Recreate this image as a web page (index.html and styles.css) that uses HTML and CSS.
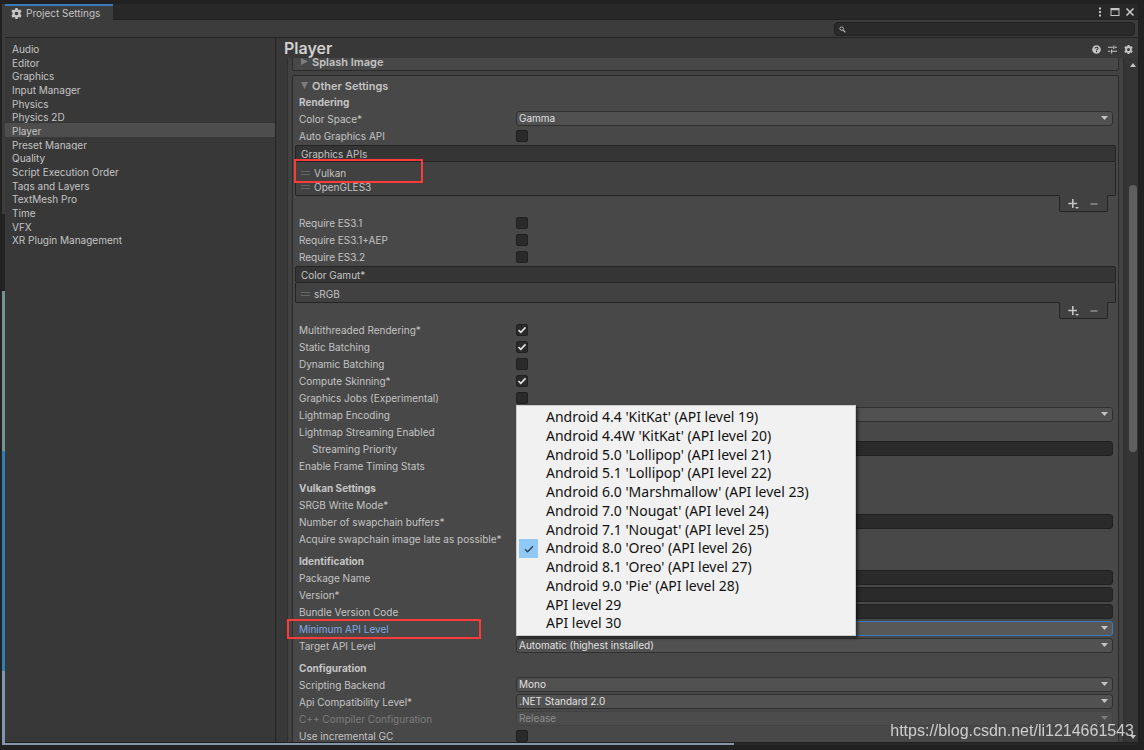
FILE: index.html
```html
<!DOCTYPE html>
<html lang="en">
<head>
<meta charset="utf-8">
<title>Project Settings</title>
<link rel="stylesheet" href="styles.css">
</head>
<body>
<svg class="defs" aria-hidden="true">
  <symbol id="gear" viewBox="0 0 12 12"><path fill-rule="evenodd" d="M4.800 0h2.400l.4 1.600 1 .5 1.600-.6 1.400 2.100-1.200 1.200v2.400l1.200 1.200-1.400 2.100-1.600-.6-1 .5-.4 1.600H4.800l-.4-1.600-1-.5-1.600.6L.4 8.400l1.200-1.200V4.800L.4 3.600l1.400-2.100 1.600.6 1-.5zM6 4a2 2 0 1 0 0 4 2 2 0 0 0 0-4z"/></symbol>
  <symbol id="check" viewBox="0 0 12 12"><path d="M2.500 6.200l2.300 2.200L9.500 3.400" fill="none" stroke="currentColor" stroke-width="1.600"/></symbol>
  <symbol id="plus" viewBox="0 0 12 12"><path d="M5 1h1.600v3.700H10v1.600H6.600V10H5V6.300H1.300V4.700H5z"/><path d="M8 9h4l-2 2z"/></symbol>
  <symbol id="minus" viewBox="0 0 12 12"><path d="M2.500 5.200h7v1.600h-7z"/></symbol>
</svg>

<div class="backdrop">
<main class="window">
  <header class="tabbar">
    <button class="tab" type="button"><svg class="tab-icon"><use href="#gear"/></svg>Project Settings</button>
    <div class="window-buttons">
      <button type="button" aria-label="Menu"><svg viewBox="0 0 10 10"><path d="M4 .5h2v2H4zM4 4h2v2H4zM4 7.500h2v2H4z"/></svg></button>
      <button type="button" aria-label="Maximize"><svg viewBox="0 0 10 10"><path fill-rule="evenodd" d="M.5 1h9v8h-9zM1.500 3.300V8h7V3.300z"/></svg></button>
      <button type="button" aria-label="Close"><svg viewBox="0 0 10 10"><path d="M1.500 1.500l7 7M8.500 1.500l-7 7" stroke="#c8c8c8" stroke-width="1.600"/></svg></button>
    </div>
  </header>

  <div class="toolbar">
    <label class="search">
      <svg viewBox="0 0 8 8"><circle cx="3" cy="3" r="2" fill="none" stroke="#c4c4c4"/><path d="M4.500 4.500l2.800 2.800" stroke="#c4c4c4" stroke-width="1.300"/></svg>
      <input type="search" aria-label="Search settings">
    </label>
  </div>

  <div class="columns">
    <nav class="categories">
      <a href="#">Audio</a>
      <a href="#">Editor</a>
      <a href="#">Graphics</a>
      <a href="#">Input Manager</a>
      <a href="#">Physics</a>
      <a href="#">Physics 2D</a>
      <a href="#" class="current">Player</a>
      <a href="#">Preset Manager</a>
      <a href="#">Quality</a>
      <a href="#">Script Execution Order</a>
      <a href="#">Tags and Layers</a>
      <a href="#">TextMesh Pro</a>
      <a href="#">Time</a>
      <a href="#">VFX</a>
      <a href="#">XR Plugin Management</a>
    </nav>

    <section class="content">
      <div class="title-row">
        <h1>Player</h1>
        <div class="title-buttons">
          <button type="button" aria-label="Help"><svg viewBox="0 0 10 10"><circle cx="5" cy="5" r="4.800"/><path d="M3.400 4c0-2 3.200-2 3.200-.2C6.600 5 5 4.800 5 6M5 6.800v1.200" fill="none" stroke="#383838" stroke-width="1.200"/></svg></button>
          <button type="button" aria-label="Presets"><svg viewBox="0 0 10 10"><path d="M0 2.500h5.500M7.500 2.500H10M6.500.5v4M0 7h2.500M4.500 7H10M4 5v4.500" fill="none" stroke="#c4c4c4" stroke-width="1.200"/></svg></button>
          <button type="button" aria-label="Options"><svg><use href="#gear"/></svg></button>
        </div>
      </div>

      <div class="scroller">
        <div class="page">
          <section class="group splash">
            <h2 class="foldout closed">Splash Image</h2>
          </section>

          <section class="group">
            <h2 class="foldout open">Other Settings</h2>

            <h3>Rendering</h3>
            <div class="row"><label for="color-space">Color Space*</label><span class="drop"><select id="color-space"><option>Gamma</option></select></span></div>
            <div class="row"><label for="auto-api">Auto Graphics API</label><span class="tick"><input type="checkbox" id="auto-api"><svg><use href="#check"/></svg></span></div>

            <div class="list">
              <div class="list-head">Graphics APIs</div>
              <ul>
                <li class="marked">Vulkan</li>
                <li>OpenGLES3</li>
              </ul>
              <div class="list-foot">
                <button type="button" aria-label="Add graphics API"><svg><use href="#plus"/></svg></button>
                <button type="button" class="dim" aria-label="Remove graphics API"><svg><use href="#minus"/></svg></button>
              </div>
            </div>

            <div class="row"><label for="es31">Require ES3.1</label><span class="tick"><input type="checkbox" id="es31"><svg><use href="#check"/></svg></span></div>
            <div class="row"><label for="es31aep">Require ES3.1+AEP</label><span class="tick"><input type="checkbox" id="es31aep"><svg><use href="#check"/></svg></span></div>
            <div class="row"><label for="es32">Require ES3.2</label><span class="tick"><input type="checkbox" id="es32"><svg><use href="#check"/></svg></span></div>

            <div class="list">
              <div class="list-head">Color Gamut*</div>
              <ul>
                <li>sRGB</li>
              </ul>
              <div class="list-foot">
                <button type="button" aria-label="Add color gamut"><svg><use href="#plus"/></svg></button>
                <button type="button" class="dim" aria-label="Remove color gamut"><svg><use href="#minus"/></svg></button>
              </div>
            </div>

            <div class="row"><label for="mt">Multithreaded Rendering*</label><span class="tick"><input type="checkbox" id="mt" checked><svg><use href="#check"/></svg></span></div>
            <div class="row"><label for="static">Static Batching</label><span class="tick"><input type="checkbox" id="static" checked><svg><use href="#check"/></svg></span></div>
            <div class="row"><label for="dynamic">Dynamic Batching</label><span class="tick"><input type="checkbox" id="dynamic"><svg><use href="#check"/></svg></span></div>
            <div class="row"><label for="skinning">Compute Skinning*</label><span class="tick"><input type="checkbox" id="skinning" checked><svg><use href="#check"/></svg></span></div>
            <div class="row"><label for="jobs">Graphics Jobs (Experimental)</label><span class="tick"><input type="checkbox" id="jobs"><svg><use href="#check"/></svg></span></div>
            <div class="row"><label for="lightmap">Lightmap Encoding</label><span class="drop"><select id="lightmap"><option></option></select></span></div>
            <div class="row"><label for="streaming">Lightmap Streaming Enabled</label><span class="tick"><input type="checkbox" id="streaming"><svg><use href="#check"/></svg></span></div>
            <div class="row indent"><label for="priority">Streaming Priority</label><input class="field" type="text" id="priority"></div>
            <div class="row"><label for="timing">Enable Frame Timing Stats</label><span class="tick"><input type="checkbox" id="timing"><svg><use href="#check"/></svg></span></div>

            <h3>Vulkan Settings</h3>
            <div class="row"><label for="srgb-write">SRGB Write Mode*</label><span class="tick"><input type="checkbox" id="srgb-write"><svg><use href="#check"/></svg></span></div>
            <div class="row"><label for="buffers">Number of swapchain buffers*</label><input class="field" type="text" id="buffers"></div>
            <div class="row"><label for="acquire">Acquire swapchain image late as possible*</label><span class="tick"><input type="checkbox" id="acquire"><svg><use href="#check"/></svg></span></div>

            <h3>Identification</h3>
            <div class="row"><label for="package">Package Name</label><input class="field" type="text" id="package"></div>
            <div class="row"><label for="version">Version*</label><input class="field" type="text" id="version"></div>
            <div class="row"><label for="bundle">Bundle Version Code</label><input class="field" type="text" id="bundle"></div>
            <div class="row active"><label for="min-api">Minimum API Level</label>
              <span class="drop"><select id="min-api"><option></option></select>
                <ul class="menu" role="listbox" aria-label="Minimum API Level">
                  <li role="option">Android 4.4 'KitKat' (API level 19)</li>
                  <li role="option">Android 4.4W 'KitKat' (API level 20)</li>
                  <li role="option">Android 5.0 'Lollipop' (API level 21)</li>
                  <li role="option">Android 5.1 'Lollipop' (API level 22)</li>
                  <li role="option">Android 6.0 'Marshmallow' (API level 23)</li>
                  <li role="option">Android 7.0 'Nougat' (API level 24)</li>
                  <li role="option">Android 7.1 'Nougat' (API level 25)</li>
                  <li role="option" aria-selected="true"><span class="menu-check"><svg viewBox="0 0 12 12"><path d="M2 6.300l2.600 2.500L10 3.300" fill="none" stroke="#26425a" stroke-width="1.300"/></svg></span>Android 8.0 'Oreo' (API level 26)</li>
                  <li role="option">Android 8.1 'Oreo' (API level 27)</li>
                  <li role="option">Android 9.0 'Pie' (API level 28)</li>
                  <li role="option">API level 29</li>
                  <li role="option">API level 30</li>
                </ul>
              </span>
            </div>
            <div class="row"><label for="target-api">Target API Level</label><span class="drop"><select id="target-api"><option>Automatic (highest installed)</option></select></span></div>

            <h3>Configuration</h3>
            <div class="row"><label for="backend">Scripting Backend</label><span class="drop"><select id="backend"><option>Mono</option></select></span></div>
            <div class="row"><label for="compat">Api Compatibility Level*</label><span class="drop"><select id="compat"><option>.NET Standard 2.0</option></select></span></div>
            <div class="row disabled"><label for="cpp">C++ Compiler Configuration</label><span class="drop"><select id="cpp" disabled><option>Release</option></select></span></div>
            <div class="row"><label for="gc">Use incremental GC</label><span class="tick"><input type="checkbox" id="gc"><svg><use href="#check"/></svg></span></div>
          </section>
        </div>
        <div class="scrollbar"><span class="arrow up"></span><span class="thumb"></span><span class="arrow down"></span></div>
      </div>
    </section>
  </div>
</main>
</div>
<div class="watermark">https://blog.csdn.net/li1214661543</div>
</body>
</html>
```
FILE: styles.css
```css
*, *::before, *::after { box-sizing: border-box; }

body {
  margin: 0;
  height: 100vh;
  padding: 4px 6px 5px 2px;
  background: #212121;
  color: #c4c4c4;
  font: 10px/16px Inter, "Liberation Sans", sans-serif;
  overflow: hidden;
}

h1, h2, h3, ul { margin: 0; padding: 0; font-size: inherit; }
ul { list-style: none; }
button { padding: 0; border: 0; background: none; color: inherit; font: inherit; }
svg { display: block; fill: #c4c4c4; }
.defs { position: absolute; width: 0; height: 0; }

/* Desktop strip that shows round the window's left and bottom edges */
.backdrop {
  height: 100%;
  padding: 0 0 3px 3px;
  background:
    linear-gradient(90deg, #8495ad 732px, #272727 732px) bottom / 100% 2px no-repeat,
    linear-gradient(#3c3c3c 210px, #222 210px 287px, #759391 287px 447px, #2f80b2 447px 667px, #8295ae 667px) left / 3px 100% no-repeat;
}

.window {
  display: flex;
  flex-direction: column;
  height: 100%;
  background: #383838;
}

/* Tab bar */
.tabbar {
  display: flex;
  justify-content: space-between;
  height: 16px;
  background: #282828;
  border-bottom: 1px solid #232323;
}
.tab {
  display: flex;
  align-items: center;
  gap: 4px;
  height: 16px;
  padding: 0 13px 0 6px;
  background: #3c3c3c;
  border-top: 2px solid #3a79bb;
}
.tab-icon { width: 11px; height: 11px; }
.window-buttons { display: flex; align-items: center; gap: 5px; padding-right: 3px; }
.window-buttons svg { width: 10px; height: 10px; }

/* Search */
.toolbar {
  display: flex;
  justify-content: flex-end;
  height: 18px;
  padding: 2px 3px 1px;
  background: #3c3c3c;
  border-bottom: 1px solid #232323;
}
.search {
  display: flex;
  align-items: center;
  width: 301px;
  padding-left: 4px;
  background: #2a2a2a;
  border: 1px solid #212121;
  border-radius: 4px;
}
.search svg { width: 7px; height: 7px; }
.search input {
  flex: 1;
  min-width: 0;
  height: 11px;
  padding: 0 4px;
  border: 0;
  outline: 0;
  background: none;
  color: inherit;
  font: inherit;
  appearance: none;
}

.columns { display: flex; flex: 1; min-height: 0; }

/* Category list */
.categories {
  display: grid;
  flex: 0 0 270px;
  grid-template-rows: repeat(15, 1fr);
  height: 208px;
  padding-top: 3px;
}
.categories a {
  padding-left: 7px;
  overflow: hidden;
  color: inherit;
  line-height: 16px;
  text-decoration: none;
}
.categories .current { background: #4d4d4d; }

/* Content column */
.content { display: flex; flex: 1; flex-direction: column; min-width: 0; border-left: 1px solid #232323; }
.title-row {
  display: flex;
  justify-content: space-between;
  height: 20px;
  padding: 0 5px 0 8px;
}
h1 { font-size: 16px; font-weight: 600; line-height: 21px; color: #d0d0d0; }
.title-buttons { display: flex; gap: 7px; padding-top: 7px; line-height: 0; }
.title-buttons button { height: 9px; }
.title-buttons svg { width: 9px; height: 9px; }

.scroller { display: flex; flex: 1; min-height: 0; padding-left: 11px; overflow: hidden; }
.page {
  flex: 1;
  min-width: 0;
  padding: 0 4px;
  background: #424242;
  border: solid #303030;
  border-width: 0 1px;
}
.scrollbar {
  display: flex;
  flex: 0 0 14px;
  flex-direction: column;
  align-items: center;
  padding: 5px 0 3px 4px;
  background: #353535;
}
.thumb { width: 8px; height: 267px; margin: 118px 0 auto; border-radius: 4px; background: #5f5f5f; }
.arrow { width: 6px; height: 4px; background: #c4c4c4; }
.up { clip-path: polygon(50% 0, 100% 100%, 0 100%); }
.down { clip-path: polygon(0 0, 100% 0, 50% 100%); }

.group {
  padding: 1px 2px;
  background: #484848;
  border: 1px solid #2b2b2b;
  border-radius: 2px;
}
.splash { height: 19px; margin: -6px 0 4px; }

.foldout { display: flex; align-items: center; gap: 4px; height: 17px; padding-left: 6px; font-size: 11px; font-weight: 600; }
.splash .foldout { height: 15px; }
.foldout::before { content: ""; width: 7px; height: 7px; background: #7c7c7c; }
.closed::before { clip-path: polygon(0 0, 100% 50%, 0 100%); }
.open::before { clip-path: polygon(0 0, 100% 0, 50% 100%); }

h3 { height: 16px; margin-top: 6px; padding-left: 4px; font-weight: 700; }
.foldout + h3 { margin-top: 0; }

/* Property rows */
.row { display: flex; align-items: center; height: 17px; padding: 0 3px 0 4px; }
.row label { flex: 0 0 217px; white-space: nowrap; }
.row.indent label { padding-left: 13px; }
.row.active { position: relative; }
.row.active label { color: #7fa8e8; }
.row.disabled { color: #7c7c7c; }

.drop { position: relative; flex: 1; height: 15px; }
.drop select {
  display: block;
  width: 100%;
  height: 15px;
  padding: 0 16px 0 2px;
  border: 1px solid #303030;
  border-radius: 3px;
  outline: 0;
  background: #515151;
  color: #e0e0e0;
  font: 10px/13px Inter, "Liberation Sans", sans-serif;
  appearance: none;
}
.drop::after {
  content: "";
  position: absolute;
  top: 5px;
  right: 5px;
  width: 7px;
  height: 4px;
  background: #c4c4c4;
  clip-path: polygon(0 0, 100% 0, 50% 100%);
}
.active .drop select { border-color: #3a79bb; background: #585858; }
.disabled .drop select { border-color: #424242; background: #4c4c4c; color: #8c8c8c; opacity: 1; }
.disabled .drop::after { background: #7c7c7c; }

.field {
  flex: 1;
  min-width: 0;
  height: 15px;
  padding: 0 3px;
  border: 1px solid #212121;
  border-radius: 3px;
  outline: 0;
  background: #2a2a2a;
  color: inherit;
  font: inherit;
}

.tick { position: relative; width: 12px; height: 12px; }
.tick input {
  display: block;
  width: 12px;
  height: 12px;
  margin: 0;
  border: 1px solid #212121;
  border-radius: 2px;
  background: #2a2a2a;
  appearance: none;
}
.tick svg { position: absolute; inset: 0; width: 12px; height: 12px; color: #e4e4e4; visibility: hidden; pointer-events: none; }
.tick input:checked + svg { visibility: visible; }

/* Reorderable lists */
.list { margin: 1px 0 2px; }
.list-head {
  height: 17px;
  padding-left: 5px;
  background: #353535;
  border: 1px solid #242424;
  border-radius: 2px;
}
.list ul {
  padding: 4px 0 1px;
  background: #414141;
  border: 1px solid #242424;
  border-top: 0;
  border-radius: 0 0 2px 2px;
}
.list li { position: relative; display: flex; align-items: center; gap: 4px; height: 14px; padding-left: 5px; }
.list li::before { content: ""; width: 9px; height: 4px; border: solid #666; border-width: 1px 0; }
.list-foot {
  display: flex;
  justify-content: space-around;
  align-items: center;
  width: 49px;
  height: 17px;
  margin: -1px 8px 0 auto;
  padding: 0 3px;
  position: relative;
  background: #414141;
  border: 1px solid #242424;
  border-top-color: #414141;
  border-radius: 0 0 2px 2px;
}
.list-foot svg { width: 12px; height: 12px; }
.list-foot .dim svg { fill: #8a8a8a; }

/* Red callout frames */
.list .marked::after, .row.active::after {
  content: "";
  position: absolute;
  z-index: 1;
  border: 2px solid #fb3b38;
}
.list .marked::after { top: -7px; left: -2px; width: 129px; height: 24px; }
.row.active::after { top: -1px; left: -8px; width: 194px; height: 20px; }

/* Open drop-down menu */
.menu {
  position: absolute;
  z-index: 2;
  left: 0;
  bottom: 0;
  display: grid;
  grid-template-rows: repeat(12, 1fr);
  width: 340px;
  height: 231px;
  padding: 2px;
  background: #f1f1f1;
  border: 1px solid #ccc;
  box-shadow: 2px 2px 3px #0008;
  color: #111;
  font: 14px/18px "Noto Sans", "Open Sans", sans-serif;
}
.menu li { position: relative; padding-left: 27px; white-space: nowrap; }
.menu-check {
  position: absolute;
  top: 0;
  left: 0;
  display: grid;
  place-items: center;
  width: 19px;
  height: 19px;
  background: #90c8f6;
}
.menu-check svg { width: 12px; height: 12px; }

.watermark {
  position: fixed;
  right: 10px;
  bottom: 10px;
  color: #ffffffb8;
  font: 16px/18px "Liberation Sans", Arial, sans-serif;
}
```
